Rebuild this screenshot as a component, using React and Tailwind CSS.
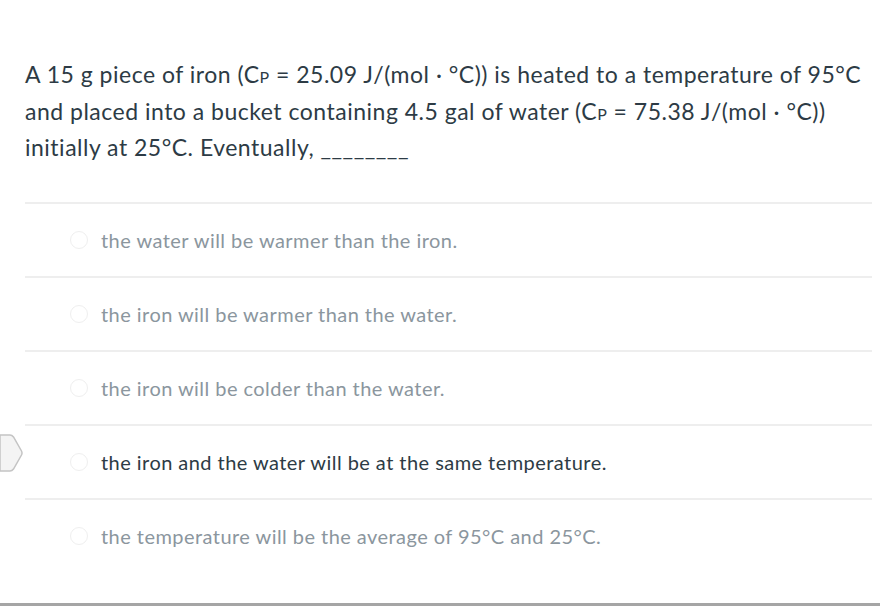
import React from 'react';

const options = [
  { text: 'the water will be warmer than the iron.', active: false },
  { text: 'the iron will be warmer than the water.', active: false },
  { text: 'the iron will be colder than the water.', active: false },
  { text: 'the iron and the water will be at the same temperature.', active: true },
  { text: 'the temperature will be the average of 95°C and 25°C.', active: false },
];

const Cp = () => (
  <span>
    C<span className="text-[16px] leading-none">P</span>
  </span>
);

const App = () => {
  return (
    <div
      className="w-[880px] h-[606px] bg-white flex flex-col overflow-hidden"
      style={{ fontFamily: 'Lato, "Open Sans", sans-serif' }}
    >
      <div className="flex-1 pl-[25px] pr-[8px] pt-[56px]">
        <p className="text-[23px] leading-[36.5px] tracking-[0.5px] text-[#2d3b45]">
          <span className="block">A 15 g piece of iron (<Cp /> = 25.09 J/(mol · °C)) is heated to a temperature of 95°C</span>
          <span className="block">and placed into a bucket containing 4.5 gal of water (<Cp /> = 75.38 J/(mol · °C))</span>
          <span className="block">initially at 25°C. Eventually, ________</span>
        </p>

        <div className="mt-[36px]">
          {options.map((o, i) => (
            <div
              key={i}
              className="relative h-[74px] border-t-2 border-[#eeeeee] flex items-center pl-[45px]"
            >
              {o.active && (
                <svg className="absolute left-[-25px] top-[6px]" width="24" height="42" viewBox="0 0 24 42">
                  <path
                    d="M0 3 L10 3 Q12 3 13.5 5 L21.5 19 Q22.5 21 21.5 23 L13.5 37 Q12 39 10 39 L0 39 Z"
                    fill="#f4f4f4"
                    stroke="#c4c4c4"
                    strokeWidth="1.5"
                  />
                </svg>
              )}
              <span className="w-[18px] h-[18px] rounded-full border border-[#efefef] bg-white shrink-0" />
              <span
                className={`ml-[13px] text-[20px] tracking-[0.45px] ${
                  o.active ? 'text-[#2d3b45]' : 'text-[#8b969e]'
                }`}
              >
                {o.text}
              </span>
            </div>
          ))}
        </div>
      </div>
      <div className="h-[3px] bg-[#a5a5a5]" />
    </div>
  );
};

export default App;
